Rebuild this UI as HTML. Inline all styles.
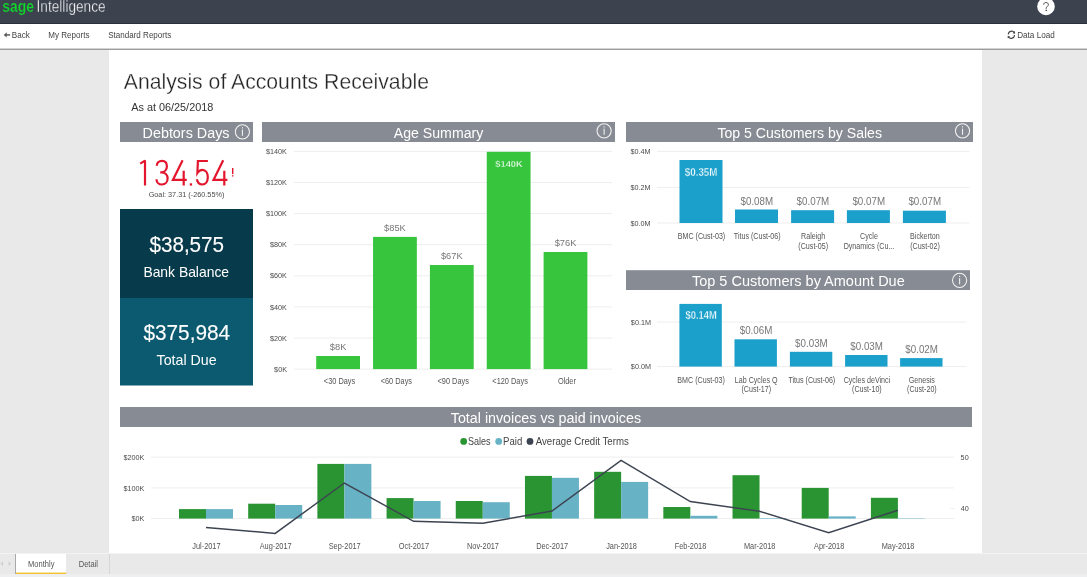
<!DOCTYPE html>
<html><head><meta charset="utf-8"><title>Analysis of Accounts Receivable</title>
<style>html,body{margin:0;padding:0;width:1087px;height:577px;overflow:hidden;background:#e9e9e9;font-family:"Liberation Sans", sans-serif;}</style>
</head><body>
<svg width="1087" height="577" viewBox="0 0 1087 577" style="position:absolute;left:0;top:0;will-change:transform;font-family:&quot;Liberation Sans&quot;, sans-serif">
<rect x="0.00" y="0.00" width="1087.00" height="577.00" fill="#e9e9e9" />
<rect x="0.00" y="0.00" width="1087.00" height="23.00" fill="#3d434e" />
<rect x="0.00" y="23.00" width="1087.00" height="1.00" fill="#2b3038" />
<rect x="0.00" y="24.00" width="1087.00" height="24.00" fill="#ffffff" />
<rect x="0.00" y="48.00" width="1087.00" height="1.00" fill="#d4d4d4" />
<rect x="0.00" y="49.00" width="1087.00" height="1.00" fill="#9c9c9c" />
<rect x="109.00" y="50.00" width="873.00" height="503.00" fill="#ffffff" />
<rect x="0.00" y="553.00" width="1087.00" height="1.00" fill="#f3f3f3" />
<rect x="0.00" y="554.00" width="1087.00" height="20.00" fill="#e9e9e9" />
<rect x="0.00" y="574.00" width="1087.00" height="3.00" fill="#eeeff1" />
<text transform="translate(2.31 11.7) scale(0.8821 1)" font-size="15.8" fill="#0fdc2a" font-weight="bold" stroke="#3d434e" stroke-width="0.25">sage</text>
<text transform="translate(36.57 11.7) scale(0.8122 1)" font-size="16.8" fill="#f6f7f9" font-weight="normal" stroke="#3d434e" stroke-width="0.35">Intelligence</text>
<circle cx="1046" cy="6.4" r="8.8" fill="#ffffff"/>
<path d="M1043.6 4.7 C1043.8 3.2 1044.8 2.5 1046 2.5 C1047.4 2.5 1048.4 3.4 1048.4 4.7 C1048.4 6.2 1046.2 6.7 1046.2 8.3 L1046.2 8.9" stroke="#3a3a3a" stroke-width="0.9" fill="none"/>
<rect x="1045.60" y="9.80" width="1.25" height="1.25" fill="#2a2a2a" />
<path d="M3.8 34.9 L6.7 32.3 L6.7 37.5 Z" fill="#555"/><rect x="6.2" y="34.2" width="3.9" height="1.45" fill="#555"/>
<text transform="translate(11.75 37.7) scale(0.9773 1)" font-size="8.3" fill="#444444" font-weight="normal" >Back</text>
<text transform="translate(48.25 37.7) scale(0.9721 1)" font-size="8.3" fill="#444444" font-weight="normal" >My Reports</text>
<text transform="translate(108.14 37.7) scale(0.9719 1)" font-size="8.3" fill="#444444" font-weight="normal" >Standard Reports</text>
<text transform="translate(1017.15 37.7) scale(0.9838 1)" font-size="8.3" fill="#444444" font-weight="normal" >Data Load</text>
<g transform="translate(0 -0.7)"><path d="M1014.3 33.3 A3.3 3.3 0 0 0 1008.3 35.3" stroke="#444" stroke-width="1.1" fill="none"/><path d="M1008.4 37.6 A3.3 3.3 0 0 0 1014.4 35.6" stroke="#444" stroke-width="1.1" fill="none"/>
<path d="M1014.9 31.8 L1015.1 34.4 L1012.6 34.0 Z" fill="#444"/><path d="M1007.8 39.2 L1007.6 36.6 L1010.1 37.0 Z" fill="#444"/></g>
<text transform="translate(123.80 89) scale(0.9380 1)" font-size="22.6" fill="#252525" font-weight="normal" stroke="#ffffff" stroke-width="0.3">Analysis of Accounts Receivable</text>
<text transform="translate(131.20 110.8) scale(1.0262 1)" font-size="10.6" fill="#333333" font-weight="normal" >As at 06/25/2018</text>
<rect x="120.00" y="122.00" width="133.00" height="20.00" fill="#878b93" />
<text transform="translate(142.55 138) scale(0.9577 1)" font-size="15" fill="#ffffff" font-weight="normal" >Debtors Days</text>
<circle cx="242.4" cy="131.8" r="7.1" stroke="#f4f4f4" stroke-width="1.05" fill="none"/>
<rect x="241.90" y="129.60" width="1.05" height="6.2" fill="#f4f4f4"/><rect x="241.90" y="127.30" width="1.05" height="1.2" fill="#f4f4f4"/>
<rect x="262.00" y="122.00" width="353.00" height="20.00" fill="#878b93" />
<text transform="translate(393.80 138) scale(0.9419 1)" font-size="15" fill="#ffffff" font-weight="normal" >Age Summary</text>
<circle cx="604.1" cy="130.8" r="7.1" stroke="#f4f4f4" stroke-width="1.05" fill="none"/>
<rect x="603.60" y="128.60" width="1.05" height="6.2" fill="#f4f4f4"/><rect x="603.60" y="126.30" width="1.05" height="1.2" fill="#f4f4f4"/>
<rect x="626.00" y="122.00" width="347.00" height="20.00" fill="#878b93" />
<text transform="translate(717.42 138) scale(0.9413 1)" font-size="15" fill="#ffffff" font-weight="normal" >Top 5 Customers by Sales</text>
<circle cx="962.5" cy="130.8" r="7.1" stroke="#f4f4f4" stroke-width="1.05" fill="none"/>
<rect x="962.00" y="128.60" width="1.05" height="6.2" fill="#f4f4f4"/><rect x="962.00" y="126.30" width="1.05" height="1.2" fill="#f4f4f4"/>
<rect x="626.00" y="270.20" width="344.00" height="19.80" fill="#878b93" />
<text transform="translate(691.91 286.2) scale(0.9674 1)" font-size="15" fill="#ffffff" font-weight="normal" >Top 5 Customers by Amount Due</text>
<circle cx="959.6" cy="280.3" r="7.1" stroke="#f4f4f4" stroke-width="1.05" fill="none"/>
<rect x="959.10" y="278.10" width="1.05" height="6.2" fill="#f4f4f4"/><rect x="959.10" y="275.80" width="1.05" height="1.2" fill="#f4f4f4"/>
<rect x="120.00" y="407.00" width="852.00" height="20.00" fill="#878b93" />
<text transform="translate(450.81 423) scale(0.9520 1)" font-size="15" fill="#ffffff" font-weight="normal" >Total invoices vs paid invoices</text>
<g stroke="#e3162e" stroke-width="2.2" fill="none" stroke-linejoin="miter"><path d="M140.2 163.6 L145 160.6 L145 185.6" stroke-linejoin="bevel"/><path d="M156.8 165.8 C156.8 162.8 159.2 160.8 162 160.8 C164.9 160.8 166.9 162.9 166.9 166.2 C166.9 169.6 164.5 172.3 161.2 172.3 L160.2 172.3 M161.2 172.3 C165.1 172.3 167.6 175 167.6 178.5 C167.6 182.1 165.2 184.5 162 184.5 C158.8 184.5 156.5 182.2 156.5 179.2"/><path d="M182.6 160.2 L172.9 179.9 L186.8 179.9 M183.7 170.8 L183.7 185.6"/><path d="M207.9 161 L197.9 161 L197.4 172.9 C198.7 170.8 200.4 169.8 202.4 169.8 C205.6 169.8 207.8 172.9 207.8 177.2 C207.8 181.6 205.5 184.5 202.3 184.5 C199.4 184.5 197.4 182.4 196.9 179.3"/><path d="M223.2 160.2 L213.5 179.9 L227.4 179.9 M224.3 170.8 L224.3 185.6"/></g>
<rect x="189.80" y="183.30" width="2.30" height="2.30" fill="#e3162e" />
<rect x="232.00" y="168.00" width="1.40" height="6.10" fill="#e3162e" />
<rect x="232.00" y="175.20" width="1.40" height="1.30" fill="#e3162e" />
<text transform="translate(148.64 197.3) scale(0.9120 1)" font-size="8" fill="#4a4a4a" font-weight="normal" >Goal: 37.31 (-260.55%)</text>
<rect x="120.00" y="209.00" width="133.00" height="89.00" fill="#073b4b" />
<rect x="120.00" y="298.00" width="133.00" height="87.50" fill="#0b5a70" />
<text transform="translate(149.39 252) scale(0.9270 1)" font-size="22.3" fill="#ffffff" font-weight="normal" stroke="#ffffff" stroke-width="0.12">$38,575</text>
<text transform="translate(143.39 276.7) scale(0.9583 1)" font-size="14.5" fill="#ffffff" font-weight="normal" >Bank Balance</text>
<text transform="translate(143.39 340) scale(0.9338 1)" font-size="22.3" fill="#ffffff" font-weight="normal" stroke="#ffffff" stroke-width="0.12">$375,984</text>
<text transform="translate(156.52 364.6) scale(0.9814 1)" font-size="14.5" fill="#ffffff" font-weight="normal" >Total Due</text>
<rect x="294.00" y="150.90" width="318.00" height="1.00" fill="#eeeeee" />
<text transform="translate(266.01 154.0) scale(0.9300 1)" font-size="7.8" fill="#4a4a4a" font-weight="normal" >$140K</text>
<rect x="294.00" y="182.00" width="318.00" height="1.00" fill="#eeeeee" />
<text transform="translate(266.01 185.1) scale(0.9300 1)" font-size="7.8" fill="#4a4a4a" font-weight="normal" >$120K</text>
<rect x="294.00" y="213.10" width="318.00" height="1.00" fill="#eeeeee" />
<text transform="translate(266.01 216.20000000000002) scale(0.9300 1)" font-size="7.8" fill="#4a4a4a" font-weight="normal" >$100K</text>
<rect x="294.00" y="244.20" width="318.00" height="1.00" fill="#eeeeee" />
<text transform="translate(270.03 247.3) scale(0.9300 1)" font-size="7.8" fill="#4a4a4a" font-weight="normal" >$80K</text>
<rect x="294.00" y="275.30" width="318.00" height="1.00" fill="#eeeeee" />
<text transform="translate(270.03 278.40000000000003) scale(0.9300 1)" font-size="7.8" fill="#4a4a4a" font-weight="normal" >$60K</text>
<rect x="294.00" y="306.40" width="318.00" height="1.00" fill="#eeeeee" />
<text transform="translate(270.03 309.5) scale(0.9300 1)" font-size="7.8" fill="#4a4a4a" font-weight="normal" >$40K</text>
<rect x="294.00" y="337.50" width="318.00" height="1.00" fill="#eeeeee" />
<text transform="translate(270.03 340.6) scale(0.9300 1)" font-size="7.8" fill="#4a4a4a" font-weight="normal" >$20K</text>
<rect x="294.00" y="368.60" width="318.00" height="1.00" fill="#eeeeee" />
<text transform="translate(274.10 371.70000000000005) scale(0.9300 1)" font-size="7.8" fill="#4a4a4a" font-weight="normal" >$0K</text>
<rect x="316.20" y="356.00" width="43.80" height="13.10" fill="#37c53e" />
<text transform="translate(329.84 350) scale(0.9500 1)" font-size="9.8" fill="#777777" font-weight="normal" >$8K</text>
<text transform="translate(323.84 383.8) scale(0.9000 1)" font-size="8.2" fill="#555555" font-weight="normal" >&lt;30 Days</text>
<rect x="373.05" y="236.90" width="43.80" height="132.20" fill="#37c53e" />
<text transform="translate(384.08 230.9) scale(0.9500 1)" font-size="9.8" fill="#777777" font-weight="normal" >$85K</text>
<text transform="translate(380.69 383.8) scale(0.9000 1)" font-size="8.2" fill="#555555" font-weight="normal" >&lt;60 Days</text>
<rect x="429.90" y="265.00" width="43.80" height="104.10" fill="#37c53e" />
<text transform="translate(440.93 259) scale(0.9500 1)" font-size="9.8" fill="#777777" font-weight="normal" >$67K</text>
<text transform="translate(437.54 383.8) scale(0.9000 1)" font-size="8.2" fill="#555555" font-weight="normal" >&lt;90 Days</text>
<rect x="486.75" y="151.80" width="43.80" height="217.30" fill="#37c53e" />
<text transform="translate(495.36 166.8) scale(0.9435 1)" font-size="9.8" fill="#ffffff" font-weight="bold" stroke="#37c53e" stroke-width="0.3">$140K</text>
<text transform="translate(492.35 383.8) scale(0.9000 1)" font-size="8.2" fill="#555555" font-weight="normal" >&lt;120 Days</text>
<rect x="543.60" y="252.00" width="43.80" height="117.10" fill="#37c53e" />
<text transform="translate(554.63 246) scale(0.9500 1)" font-size="9.8" fill="#777777" font-weight="normal" >$76K</text>
<text transform="translate(557.89 383.8) scale(0.9000 1)" font-size="8.2" fill="#555555" font-weight="normal" >Older</text>
<rect x="657.00" y="150.90" width="312.50" height="1.00" fill="#eeeeee" />
<text transform="translate(630.45 154.0) scale(0.9300 1)" font-size="7.8" fill="#4a4a4a" font-weight="normal" >$0.4M</text>
<rect x="657.00" y="186.90" width="312.50" height="1.00" fill="#eeeeee" />
<text transform="translate(630.45 190.0) scale(0.9300 1)" font-size="7.8" fill="#4a4a4a" font-weight="normal" >$0.2M</text>
<rect x="657.00" y="222.50" width="312.50" height="1.00" fill="#eeeeee" />
<text transform="translate(630.45 225.6) scale(0.9300 1)" font-size="7.8" fill="#4a4a4a" font-weight="normal" >$0.0M</text>
<rect x="679.50" y="160.00" width="43.00" height="63.00" fill="#1ba0cb" />
<text transform="translate(684.75 175.8) scale(0.9638 1)" font-size="10.2" fill="#ffffff" font-weight="bold" stroke="#1ba0cb" stroke-width="0.3">$0.35M</text>
<text transform="translate(677.75 239.2) scale(0.8700 1)" font-size="8.2" fill="#555555" font-weight="normal" >BMC (Cust-03)</text>
<rect x="735.00" y="209.50" width="43.00" height="13.50" fill="#1ba0cb" />
<text transform="translate(740.51 204.6) scale(0.9600 1)" font-size="10.2" fill="#777777" font-weight="normal" >$0.08M</text>
<text transform="translate(733.81 239.2) scale(0.8700 1)" font-size="8.2" fill="#555555" font-weight="normal" >Titus (Cust-06)</text>
<rect x="791.10" y="210.20" width="43.00" height="12.80" fill="#1ba0cb" />
<text transform="translate(796.61 204.6) scale(0.9600 1)" font-size="10.2" fill="#777777" font-weight="normal" >$0.07M</text>
<text transform="translate(801.05 239.2) scale(0.8700 1)" font-size="8.2" fill="#555555" font-weight="normal" >Raleigh</text>
<text transform="translate(798.34 248.7) scale(0.8700 1)" font-size="8.2" fill="#555555" font-weight="normal" >(Cust-05)</text>
<rect x="846.90" y="210.20" width="43.00" height="12.80" fill="#1ba0cb" />
<text transform="translate(852.41 204.6) scale(0.9600 1)" font-size="10.2" fill="#777777" font-weight="normal" >$0.07M</text>
<text transform="translate(860.06 239.2) scale(0.8700 1)" font-size="8.2" fill="#555555" font-weight="normal" >Cycle</text>
<text transform="translate(843.67 248.7) scale(0.8700 1)" font-size="8.2" fill="#555555" font-weight="normal" >Dynamics (Cu...</text>
<rect x="902.90" y="210.70" width="43.00" height="12.30" fill="#1ba0cb" />
<text transform="translate(908.41 204.6) scale(0.9600 1)" font-size="10.2" fill="#777777" font-weight="normal" >$0.07M</text>
<text transform="translate(910.09 239.2) scale(0.8700 1)" font-size="8.2" fill="#555555" font-weight="normal" >Bickerton</text>
<text transform="translate(910.14 248.7) scale(0.8700 1)" font-size="8.2" fill="#555555" font-weight="normal" >(Cust-02)</text>
<rect x="657.00" y="321.60" width="309.50" height="1.00" fill="#eeeeee" />
<text transform="translate(630.85 324.70000000000005) scale(0.9300 1)" font-size="7.8" fill="#4a4a4a" font-weight="normal" >$0.1M</text>
<rect x="657.00" y="366.10" width="309.50" height="1.00" fill="#eeeeee" />
<text transform="translate(630.85 369.20000000000005) scale(0.9300 1)" font-size="7.8" fill="#4a4a4a" font-weight="normal" >$0.0M</text>
<rect x="679.40" y="303.90" width="42.40" height="62.70" fill="#1ba0cb" />
<text transform="translate(685.49 319.2) scale(0.9200 1)" font-size="10.2" fill="#ffffff" font-weight="bold" stroke="#1ba0cb" stroke-width="0.3">$0.14M</text>
<text transform="translate(677.35 382.8) scale(0.8700 1)" font-size="8.2" fill="#555555" font-weight="normal" >BMC (Cust-03)</text>
<rect x="734.50" y="339.30" width="42.40" height="27.30" fill="#1ba0cb" />
<text transform="translate(739.71 334.40000000000003) scale(0.9600 1)" font-size="10.2" fill="#777777" font-weight="normal" >$0.06M</text>
<text transform="translate(734.77 382.8) scale(0.8700 1)" font-size="8.2" fill="#555555" font-weight="normal" >Lab Cycles Q</text>
<text transform="translate(741.44 392.3) scale(0.8700 1)" font-size="8.2" fill="#555555" font-weight="normal" >(Cust-17)</text>
<rect x="789.90" y="351.80" width="42.40" height="14.80" fill="#1ba0cb" />
<text transform="translate(795.11 346.90000000000003) scale(0.9600 1)" font-size="10.2" fill="#777777" font-weight="normal" >$0.03M</text>
<text transform="translate(788.41 382.8) scale(0.8700 1)" font-size="8.2" fill="#555555" font-weight="normal" >Titus (Cust-06)</text>
<rect x="845.10" y="355.00" width="42.40" height="11.60" fill="#1ba0cb" />
<text transform="translate(850.31 350.1) scale(0.9600 1)" font-size="10.2" fill="#777777" font-weight="normal" >$0.03M</text>
<text transform="translate(843.63 382.8) scale(0.8700 1)" font-size="8.2" fill="#555555" font-weight="normal" >Cycles deVinci</text>
<text transform="translate(852.04 392.3) scale(0.8700 1)" font-size="8.2" fill="#555555" font-weight="normal" >(Cust-10)</text>
<rect x="900.10" y="358.10" width="42.40" height="8.50" fill="#1ba0cb" />
<text transform="translate(905.31 353.20000000000005) scale(0.9600 1)" font-size="10.2" fill="#777777" font-weight="normal" >$0.02M</text>
<text transform="translate(908.76 382.8) scale(0.8700 1)" font-size="8.2" fill="#555555" font-weight="normal" >Genesis</text>
<text transform="translate(907.04 392.3) scale(0.8700 1)" font-size="8.2" fill="#555555" font-weight="normal" >(Cust-20)</text>
<circle cx="463.7" cy="441.4" r="3.4" fill="#2a9433"/>
<text transform="translate(467.89 444.9) scale(0.9050 1)" font-size="10" fill="#444" font-weight="normal" >Sales</text>
<circle cx="498.7" cy="441.4" r="3.4" fill="#68b2c6"/>
<text transform="translate(503.03 444.9) scale(0.9596 1)" font-size="10" fill="#444" font-weight="normal" >Paid</text>
<circle cx="530" cy="441.4" r="3.4" fill="#3d4451"/>
<text transform="translate(535.70 444.9) scale(0.9677 1)" font-size="10" fill="#444" font-weight="normal" >Average Credit Terms</text>
<rect x="151.00" y="456.60" width="803.00" height="1.00" fill="#eeeeee" />
<text transform="translate(123.41 459.70000000000005) scale(0.9300 1)" font-size="7.8" fill="#4a4a4a" font-weight="normal" >$200K</text>
<rect x="151.00" y="487.40" width="803.00" height="1.00" fill="#eeeeee" />
<text transform="translate(123.41 490.5) scale(0.9300 1)" font-size="7.8" fill="#4a4a4a" font-weight="normal" >$100K</text>
<rect x="151.00" y="518.10" width="803.00" height="1.00" fill="#eeeeee" />
<text transform="translate(131.50 521.2) scale(0.9300 1)" font-size="7.8" fill="#4a4a4a" font-weight="normal" >$0K</text>
<rect x="950.50" y="508.00" width="3.50" height="1.00" fill="#eeeeee" />
<text transform="translate(960.61 459.7) scale(0.9300 1)" font-size="7.8" fill="#4a4a4a" font-weight="normal" >50</text>
<text transform="translate(960.75 511.1) scale(0.9300 1)" font-size="7.8" fill="#4a4a4a" font-weight="normal" >40</text>
<rect x="179.00" y="509.10" width="27.00" height="9.50" fill="#2a9433" />
<rect x="206.00" y="509.10" width="27.00" height="9.50" fill="#68b2c6" />
<text transform="translate(192.28 548.8) scale(0.9000 1)" font-size="8.2" fill="#555555" font-weight="normal" >Jul-2017</text>
<rect x="248.19" y="503.70" width="27.00" height="14.90" fill="#2a9433" />
<rect x="275.19" y="505.00" width="27.00" height="13.60" fill="#68b2c6" />
<text transform="translate(259.68 548.8) scale(0.9000 1)" font-size="8.2" fill="#555555" font-weight="normal" >Aug-2017</text>
<rect x="317.38" y="463.90" width="27.00" height="54.70" fill="#2a9433" />
<rect x="344.38" y="463.90" width="27.00" height="54.70" fill="#68b2c6" />
<text transform="translate(328.70 548.8) scale(0.9000 1)" font-size="8.2" fill="#555555" font-weight="normal" >Sep-2017</text>
<rect x="386.57" y="498.10" width="27.00" height="20.50" fill="#2a9433" />
<rect x="413.57" y="501.00" width="27.00" height="17.60" fill="#68b2c6" />
<text transform="translate(398.72 548.8) scale(0.9000 1)" font-size="8.2" fill="#555555" font-weight="normal" >Oct-2017</text>
<rect x="455.76" y="501.00" width="27.00" height="17.60" fill="#2a9433" />
<rect x="482.76" y="502.20" width="27.00" height="16.40" fill="#68b2c6" />
<text transform="translate(466.95 548.8) scale(0.9000 1)" font-size="8.2" fill="#555555" font-weight="normal" >Nov-2017</text>
<rect x="524.95" y="475.90" width="27.00" height="42.70" fill="#2a9433" />
<rect x="551.95" y="477.80" width="27.00" height="40.80" fill="#68b2c6" />
<text transform="translate(536.14 548.8) scale(0.9000 1)" font-size="8.2" fill="#555555" font-weight="normal" >Dec-2017</text>
<rect x="594.14" y="471.80" width="27.00" height="46.80" fill="#2a9433" />
<rect x="621.14" y="481.90" width="27.00" height="36.70" fill="#68b2c6" />
<text transform="translate(606.14 548.8) scale(0.9000 1)" font-size="8.2" fill="#555555" font-weight="normal" >Jan-2018</text>
<rect x="663.33" y="507.00" width="27.00" height="11.60" fill="#2a9433" />
<rect x="690.33" y="515.80" width="27.00" height="2.80" fill="#68b2c6" />
<text transform="translate(674.69 548.8) scale(0.9000 1)" font-size="8.2" fill="#555555" font-weight="normal" >Feb-2018</text>
<rect x="732.52" y="475.20" width="27.00" height="43.40" fill="#2a9433" />
<rect x="759.52" y="518.00" width="27.00" height="0.60" fill="#68b2c6" />
<text transform="translate(743.88 548.8) scale(0.9000 1)" font-size="8.2" fill="#555555" font-weight="normal" >Mar-2018</text>
<rect x="801.71" y="487.90" width="27.00" height="30.70" fill="#2a9433" />
<rect x="828.71" y="516.40" width="27.00" height="2.20" fill="#68b2c6" />
<text transform="translate(813.97 548.8) scale(0.9000 1)" font-size="8.2" fill="#555555" font-weight="normal" >Apr-2018</text>
<rect x="870.90" y="497.80" width="27.00" height="20.80" fill="#2a9433" />
<rect x="897.90" y="518.20" width="27.00" height="0.40" fill="#68b2c6" />
<text transform="translate(881.65 548.8) scale(0.9000 1)" font-size="8.2" fill="#555555" font-weight="normal" >May-2018</text>
<polyline points="206.0,527.5 275.2,533.4 344.4,483 413.6,521.3 482.8,523.2 552.0,511 621.1,460.3 690.3,501.5 759.5,511.3 828.7,532.8 897.9,510.2" fill="none" stroke="#3d4451" stroke-width="1.45" stroke-linejoin="miter"/>
<rect x="15.50" y="554.00" width="51.00" height="20.00" fill="#ffffff" />
<rect x="15.00" y="554.00" width="1.00" height="20.00" fill="#a8a8a8" />
<rect x="16.00" y="572.60" width="50.50" height="1.40" fill="#f0c030" />
<rect x="109.00" y="554.00" width="1.00" height="20.00" fill="#d6d6d6" />
<rect x="66.50" y="554.00" width="0.60" height="20.00" fill="#dddddd" />
<text transform="translate(28.10 567) scale(0.9200 1)" font-size="8.2" fill="#555" font-weight="normal" >Monthly</text>
<text transform="translate(78.71 567) scale(0.9200 1)" font-size="8.2" fill="#555" font-weight="normal" >Detail</text>
<path d="M3 561.3 L0.6 563.8 L3 566.3 Z" fill="#cfcfcf"/><path d="M8.6 561.3 L11 563.8 L8.6 566.3 Z" fill="#cfcfcf"/>
</svg>
</body></html>
